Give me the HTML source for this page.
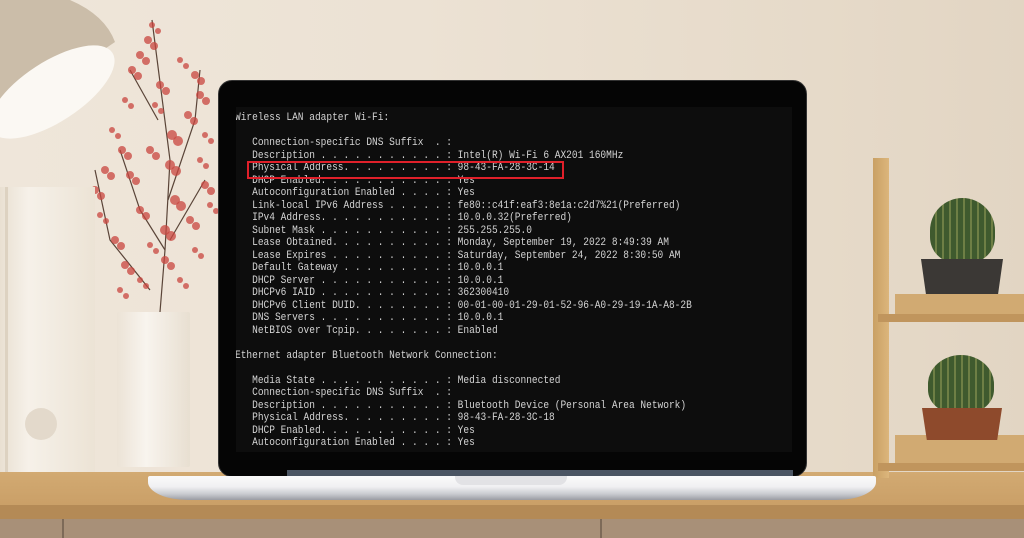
<!DOCTYPE html>
<html><head><meta charset="utf-8"><style>
*{margin:0;padding:0;box-sizing:border-box}
body{width:1024px;height:538px;overflow:hidden;position:relative;background:linear-gradient(90deg,#efe6da 0%,#ece2d4 40%,#e6dac9 80%,#e2d5c3 100%);font-family:"Liberation Sans",sans-serif}
.a{position:absolute}
pre{position:absolute;font-family:"Liberation Mono",monospace;font-size:11px;line-height:12.5px;color:#d4d4d4;transform:scaleX(0.865);transform-origin:0 0;white-space:pre}
</style></head><body>
<!-- lamp -->
<svg class="a" style="left:0;top:0" width="240" height="330">
<path d="M0 0 L70 0 Q105 15 115 42 L0 120 Z" fill="#cbbda9"/>
<ellipse cx="52" cy="92" rx="72" ry="30" transform="rotate(-33 52 92)" fill="#fbf8f3"/>
<g stroke="#5a4438" stroke-width="1.2" fill="none">
<path d="M160 312 L165 250 L170 160 L152 20"/><path d="M165 250 L140 210 L120 150"/><path d="M168 200 L195 120 L200 70"/><path d="M150 290 L110 240 L95 170"/><path d="M170 240 L205 180"/><path d="M158 120 L130 70"/></g>
<g fill="#c9463f" opacity="0.75" id="d">
<circle cx="152" cy="25" r="3"/><circle cx="148" cy="40" r="4"/><circle cx="140" cy="55" r="4"/><circle cx="132" cy="70" r="4"/><circle cx="160" cy="85" r="4"/><circle cx="125" cy="100" r="3"/><circle cx="195" cy="75" r="4"/><circle cx="200" cy="95" r="4"/><circle cx="188" cy="115" r="4"/><circle cx="172" cy="135" r="5"/><circle cx="150" cy="150" r="4"/><circle cx="122" cy="150" r="4"/><circle cx="105" cy="170" r="4"/><circle cx="95" cy="190" r="4"/><circle cx="130" cy="175" r="4"/><circle cx="170" cy="165" r="5"/><circle cx="200" cy="160" r="3"/><circle cx="205" cy="185" r="4"/><circle cx="175" cy="200" r="5"/><circle cx="140" cy="210" r="4"/><circle cx="115" cy="240" r="4"/><circle cx="125" cy="265" r="4"/><circle cx="165" cy="230" r="5"/><circle cx="190" cy="220" r="4"/><circle cx="195" cy="250" r="3"/><circle cx="140" cy="280" r="3"/><circle cx="165" cy="260" r="4"/><circle cx="112" cy="130" r="3"/><circle cx="180" cy="60" r="3"/><circle cx="205" cy="135" r="3"/><circle cx="100" cy="215" r="3"/><circle cx="150" cy="245" r="3"/><circle cx="180" cy="280" r="3"/><circle cx="155" cy="105" r="3"/><circle cx="120" cy="290" r="3"/><circle cx="210" cy="205" r="3"/>
</g>
<use href="#d" transform="translate(6 6)"/>
</svg>
<!-- binders -->
<div class="a" style="left:0;top:187px;width:95px;height:285px;background:linear-gradient(90deg,#e9e0d2,#f6f1e9 30%,#ece3d5)"></div>
<div class="a" style="left:5px;top:187px;width:3px;height:285px;background:#ddd2c1"></div>
<div class="a" style="left:25px;top:408px;width:32px;height:32px;border-radius:50%;background:#e3d9cb"></div>
<!-- vase -->
<div class="a" style="left:117px;top:312px;width:73px;height:155px;background:linear-gradient(90deg,#ece3d6,#f8f4ee 40%,#e8dfd1);border-radius:2px"></div>
<!-- desk -->
<div class="a" style="left:0;top:472px;width:1024px;height:38px;background:linear-gradient(#d2aa72,#c99e66)"></div>
<div class="a" style="left:0;top:505px;width:1024px;height:14px;background:#b48a56"></div>
<div class="a" style="left:0;top:519px;width:1024px;height:19px;background:#a89078"></div>
<div class="a" style="left:62px;top:519px;width:2px;height:19px;background:#7d6a58"></div>
<div class="a" style="left:600px;top:519px;width:2px;height:19px;background:#7d6a58"></div>
<!-- shelf -->
<div class="a" style="left:873px;top:158px;width:16px;height:320px;background:linear-gradient(90deg,#c9a064,#dcb67c)"></div>
<div class="a" style="left:895px;top:294px;width:129px;height:20px;background:#d1aa72"></div>
<div class="a" style="left:878px;top:314px;width:146px;height:8px;background:#c0955d"></div>
<div class="a" style="left:895px;top:435px;width:129px;height:28px;background:#d1aa72"></div>
<div class="a" style="left:878px;top:463px;width:146px;height:8px;background:#c0955d"></div>
<div class="a" style="left:930px;top:198px;width:65px;height:65px;border-radius:50% 50% 40% 40%;background:repeating-linear-gradient(90deg,#3f5a2e 0 5px,#6e7f45 5px 7px)"></div>
<div class="a" style="left:921px;top:259px;width:82px;height:35px;background:#3b3835;clip-path:polygon(0 0,100% 0,94% 100%,6% 100%)"></div>
<div class="a" style="left:928px;top:355px;width:66px;height:58px;border-radius:50% 50% 40% 40%;background:repeating-linear-gradient(90deg,#3f5a2e 0 5px,#6e7f45 5px 7px)"></div>
<div class="a" style="left:922px;top:408px;width:80px;height:32px;background:#8e4a2c;clip-path:polygon(0 0,100% 0,94% 100%,6% 100%)"></div>
<!-- laptop -->
<div class="a" style="left:218px;top:80px;width:589px;height:397px;background:#050505;border-radius:14px;border:1px solid #333"></div>
<div class="a" style="left:236px;top:107px;width:556px;height:345px;background:#0d0d0d"></div>
<div class="a" style="left:287px;top:470px;width:506px;height:8px;background:#4b5563"></div>
<div class="a" style="left:148px;top:476px;width:728px;height:24px;border-radius:2px 2px 40px 40px/2px 2px 18px 18px;background:linear-gradient(#fafafa,#f0f0f2 45%,#c9cbd0 75%,#9a9ca3)"></div>
<div class="a" style="left:455px;top:476px;width:112px;height:9px;border-radius:0 0 8px 8px;background:#e2e2e5"></div>
<div class="a" style="left:236px;top:107px;width:556px;height:345px;overflow:hidden">
<pre style="left:-1px;top:5px">Wireless LAN adapter Wi-Fi:

   Connection-specific DNS Suffix  . :
   Description . . . . . . . . . . . : Intel(R) Wi-Fi 6 AX201 160MHz
   Physical Address. . . . . . . . . : 98-43-FA-28-3C-14
   DHCP Enabled. . . . . . . . . . . : Yes
   Autoconfiguration Enabled . . . . : Yes
   Link-local IPv6 Address . . . . . : fe80::c41f:eaf3:8e1a:c2d7%21(Preferred)
   IPv4 Address. . . . . . . . . . . : 10.0.0.32(Preferred)
   Subnet Mask . . . . . . . . . . . : 255.255.255.0
   Lease Obtained. . . . . . . . . . : Monday, September 19, 2022 8:49:39 AM
   Lease Expires . . . . . . . . . . : Saturday, September 24, 2022 8:30:50 AM
   Default Gateway . . . . . . . . . : 10.0.0.1
   DHCP Server . . . . . . . . . . . : 10.0.0.1
   DHCPv6 IAID . . . . . . . . . . . : 362300410
   DHCPv6 Client DUID. . . . . . . . : 00-01-00-01-29-01-52-96-A0-29-19-1A-A8-2B
   DNS Servers . . . . . . . . . . . : 10.0.0.1
   NetBIOS over Tcpip. . . . . . . . : Enabled

Ethernet adapter Bluetooth Network Connection:

   Media State . . . . . . . . . . . : Media disconnected
   Connection-specific DNS Suffix  . :
   Description . . . . . . . . . . . : Bluetooth Device (Personal Area Network)
   Physical Address. . . . . . . . . : 98-43-FA-28-3C-18
   DHCP Enabled. . . . . . . . . . . : Yes
   Autoconfiguration Enabled . . . . : Yes</pre>
</div>
<div class="a" style="left:247px;top:161px;width:317px;height:18px;border:2px solid #e0202a"></div>
</body></html>
